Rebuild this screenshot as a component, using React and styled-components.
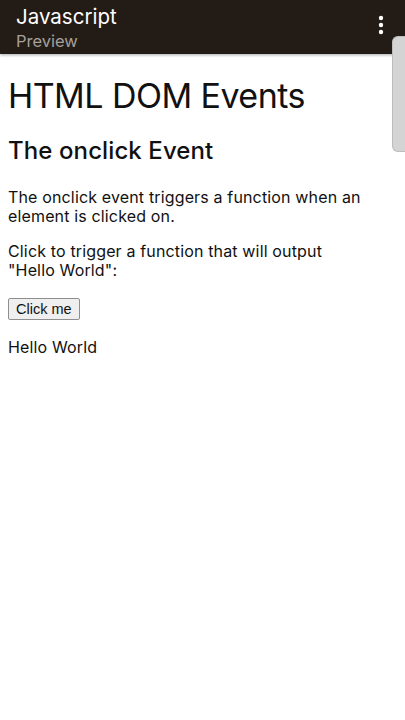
import React, { useState } from "react";
import styled, { createGlobalStyle } from "styled-components";

const GlobalStyle = createGlobalStyle`
  html, body {
    margin: 0;
    padding: 0;
    background: #ffffff;
  }
  body {
    font-family: Inter, "Liberation Sans", Arial, sans-serif;
    overflow: hidden;
  }
`;

const Screen = styled.div`
  width: 405px;
  height: 720px;
  display: flex;
  flex-direction: column;
  background: #ffffff;
  position: relative;
  overflow: hidden;
`;

const AppBar = styled.header`
  height: 54px;
  background: #231b16;
  display: flex;
  align-items: center;
  justify-content: space-between;
  padding: 0 12px 0 16px;
  box-shadow: 0 1px 3px rgba(0, 0, 0, 0.35);
  z-index: 2;
  flex-shrink: 0;
`;

const Titles = styled.div`
  display: flex;
  flex-direction: column;
  padding-top: 3px;
`;

const Title = styled.div`
  color: #ffffff;
  font-family: Inter, "Liberation Sans", sans-serif;
  font-size: 20.5px;
  line-height: 24px;
`;

const Subtitle = styled.div`
  color: #a6a09b;
  font-family: Inter, "Liberation Sans", sans-serif;
  font-size: 16.5px;
  line-height: 22px;
  margin-top: 1px;
`;

const MenuButton = styled.button`
  background: none;
  border: none;
  padding: 0;
  width: 24px;
  height: 24px;
  display: flex;
  align-items: center;
  justify-content: center;
  margin-bottom: 4px;
`;

const Preview = styled.main`
  flex: 1;
  position: relative;
  padding: 0 36px 0 8px;
  color: #111111;
  font-family: Inter, "Liberation Sans", Arial, sans-serif;
`;

const Heading = styled.h1`
  font-size: 34px;
  font-weight: 400;
  margin: 22px 0 0;
  line-height: 40px;
  letter-spacing: -0.55px;
  white-space: nowrap;
`;

const SubHeading = styled.h2`
  font-size: 24px;
  font-weight: 500;
  margin: 20px 0 0;
  line-height: 30px;
  letter-spacing: 0.1px;
`;

const Para = styled.p`
  font-size: 16px;
  line-height: 19px;
  letter-spacing: 0.15px;
  margin: ${(p) => p.$top || 16}px 0 0;
`;

const Button = styled.button`
  margin-top: 18px;
  font-family: "Liberation Sans", Arial, sans-serif;
  font-size: 14.5px;
  color: #111;
  padding: 0 7px;
  height: 22px;
  background: #efefef;
  border: 1px solid #8f8f8f;
  border-radius: 2px;
`;

const Output = styled.p`
  font-size: 16px;
  line-height: 19px;
  letter-spacing: 0.15px;
  margin: 18px 0 0;
`;

const ScrollThumb = styled.div`
  position: absolute;
  right: 0;
  top: 36px;
  width: 12px;
  height: 114px;
  background: #d4d4d4;
  border: 1px solid #bdbdbd;
  border-right: none;
  border-radius: 6px 0 0 6px;
  z-index: 3;
`;

const DotsIcon = () => (
  <svg width="6" height="20" viewBox="0 0 6 20">
    <circle cx="3" cy="3" r="2.2" fill="#ffffff" />
    <circle cx="3" cy="10" r="2.2" fill="#ffffff" />
    <circle cx="3" cy="17" r="2.2" fill="#ffffff" />
  </svg>
);

export default function App() {
  const [out, setOut] = useState("Hello World");

  return (
    <Screen>
      <GlobalStyle />
      <AppBar>
        <Titles>
          <Title>Javascript</Title>
          <Subtitle>Preview</Subtitle>
        </Titles>
        <MenuButton aria-label="menu">
          <DotsIcon />
        </MenuButton>
      </AppBar>
      <ScrollThumb />
      <Preview>
        <Heading>HTML DOM Events</Heading>
        <SubHeading>The onclick Event</SubHeading>
        <Para $top={22}>The onclick event triggers a function when an element is clicked on.</Para>
        <Para>Click to trigger a function that will output "Hello World":</Para>
        <Button onClick={() => setOut("Hello World")}>Click me</Button>
        <Output>{out}</Output>
      </Preview>
    </Screen>
  );
}
